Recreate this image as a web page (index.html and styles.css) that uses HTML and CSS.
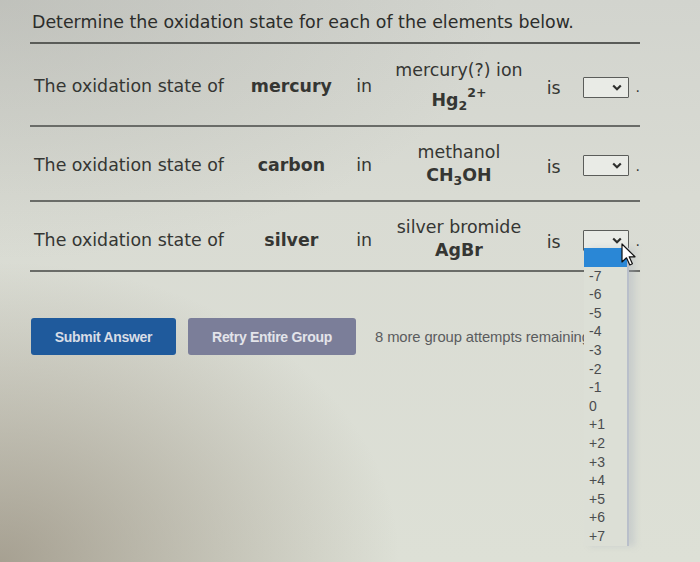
FILE: index.html
```html
<!DOCTYPE html>
<html>
<head>
<meta charset="utf-8">
<link rel="stylesheet" href="styles.css">
</head>
<body>
<div class="page">
  <h1 class="title">Determine the oxidation state for each of the elements below.</h1>

  <div class="row row--ion">
    <div class="label">The oxidation state of</div>
    <div class="element">mercury</div>
    <div class="in">in</div>
    <div class="compound">
      <div class="name">mercury(?) ion</div>
      <div class="formula">Hg<sub>2</sub><sup>2+</sup></div>
    </div>
    <div class="is">is</div>
    <div class="select"><svg width="10" height="7" viewBox="0 0 10 7"><path d="M1.2 1.5 L5 5.2 L8.8 1.5" fill="none" stroke="#2e2f2d" stroke-width="2.2"/></svg></div>
    <div class="dot">.</div>
  </div>

  <div class="row">
    <div class="label">The oxidation state of</div>
    <div class="element">carbon</div>
    <div class="in">in</div>
    <div class="compound">
      <div class="name">methanol</div>
      <div class="formula">CH<sub>3</sub>OH</div>
    </div>
    <div class="is">is</div>
    <div class="select"><svg width="10" height="7" viewBox="0 0 10 7"><path d="M1.2 1.5 L5 5.2 L8.8 1.5" fill="none" stroke="#2e2f2d" stroke-width="2.2"/></svg></div>
    <div class="dot">.</div>
  </div>

  <div class="row row--last">
    <div class="label">The oxidation state of</div>
    <div class="element">silver</div>
    <div class="in">in</div>
    <div class="compound">
      <div class="name">silver bromide</div>
      <div class="formula">AgBr</div>
    </div>
    <div class="is">is</div>
    <div class="select"><svg width="10" height="7" viewBox="0 0 10 7"><path d="M1.2 1.5 L5 5.2 L8.8 1.5" fill="none" stroke="#2e2f2d" stroke-width="2.2"/></svg></div>
    <div class="dot">.</div>
  </div>

  <div class="actions">
    <button class="btn btn--submit">Submit Answer</button>
    <button class="btn btn--retry">Retry Entire Group</button>
    <span class="attempts">8 more group attempts remaining</span>
  </div>

  <ul class="menu">
    <li class="menu-item menu-item--active">&nbsp;</li>
    <li class="menu-item">-7</li>
    <li class="menu-item">-6</li>
    <li class="menu-item">-5</li>
    <li class="menu-item">-4</li>
    <li class="menu-item">-3</li>
    <li class="menu-item">-2</li>
    <li class="menu-item">-1</li>
    <li class="menu-item">0</li>
    <li class="menu-item">+1</li>
    <li class="menu-item">+2</li>
    <li class="menu-item">+3</li>
    <li class="menu-item">+4</li>
    <li class="menu-item">+5</li>
    <li class="menu-item">+6</li>
    <li class="menu-item">+7</li>
  </ul>

  <svg class="cursor" width="16" height="24" viewBox="0 0 16 24">
    <path d="M1 1 L1 19 L5.5 14.8 L8.8 22 L11.4 20.8 L8.2 13.8 L14 13.8 Z" fill="#fff" stroke="#111" stroke-width="1.2" stroke-linejoin="round"/>
  </svg>
</div>
</body>
</html>
```

FILE: styles.css
```css
html, body {
  margin: 0;
  padding: 0;
}

body {
  width: 700px;
  height: 562px;
  overflow: hidden;
  background:
    radial-gradient(ellipse 400px 300px at 0% 100%, rgba(130, 118, 100, 0.6), rgba(130, 118, 100, 0) 100%),
    radial-gradient(ellipse 500px 260px at 0% 0%, rgba(150, 150, 145, 0.3), rgba(150, 150, 145, 0) 100%),
    linear-gradient(180deg, #d2d4ce 0%, #d9dbd3 35%, #dde0d6 100%);
  font-family: "DejaVu Sans", Verdana, sans-serif;
  color: #353633;
}

.page {
  position: relative;
  width: 610px;
  height: 562px;
  padding-left: 30px;
}

.title {
  margin: 0;
  padding: 9px 0 7px 2px;
  font-size: 17.4px;
  font-weight: normal;
  line-height: 26px;
  border-bottom: 2px solid #5a5c58;
  color: #2c2d2b;
}

.row {
  display: flex;
  align-items: center;
  padding: 14px 0 14px;
  border-bottom: 2px solid #6a6c68;
  font-size: 17.4px;
}

.row--ion {
  padding-top: 15px;
}

.row--ion .formula {
  margin-top: 8px;
}

.row--last {
  padding-bottom: 9px;
}

.label {
  width: 202px;
  padding-left: 4px;
  padding-top: 2px;
}

.element {
  width: 112px;
  text-align: center;
  font-weight: bold;
  padding-top: 2px;
}

.in {
  width: 33px;
  padding-left: 9px;
  padding-top: 2px;
}

.compound {
  width: 140px;
  text-align: center;
}

.name {
  line-height: 22px;
}

.formula {
  line-height: 22px;
  margin-top: 1px;
  font-weight: bold;
}

.formula sub {
  font-size: 12.5px;
  line-height: 0;
  vertical-align: -4px;
}

.formula sup {
  font-size: 12.5px;
  line-height: 0;
  vertical-align: 9px;
}

.is {
  width: 36px;
  padding-left: 18px;
  padding-top: 6px;
}

.select {
  box-sizing: border-box;
  width: 46px;
  height: 21px;
  margin-top: 4px;
  border: 1.5px solid #5b5d5a;
  border-radius: 1px;
  background: #e9ebe6;
  display: flex;
  align-items: center;
  justify-content: flex-end;
  padding-right: 6px;
}

.select svg {
  display: block;
}

.dot {
  margin-left: 7px;
  padding-top: 4px;
  font-size: 14px;
}

.actions {
  display: flex;
  align-items: center;
  margin-top: 46px;
  padding-left: 1px;
}

.btn {
  height: 37px;
  border: none;
  border-radius: 3px;
  font-family: "Liberation Sans", Arial, sans-serif;
  font-weight: bold;
  font-size: 14px;
  letter-spacing: -0.3px;
  color: #d8dde6;
  padding: 0;
}

.btn--submit {
  width: 145px;
  background: #1f5a9c;
}

.btn--retry {
  width: 168px;
  margin-left: 12px;
  background: #7b7e99;
  color: #e3e4ea;
}

.attempts {
  margin-left: 19px;
  font-family: "Liberation Sans", Arial, sans-serif;
  font-size: 14.8px;
  letter-spacing: -0.1px;
  color: #5a5c5e;
  white-space: nowrap;
}

.menu {
  position: absolute;
  left: 584px;
  top: 248px;
  width: 43px;
  margin: 0;
  padding: 0;
  list-style: none;
  background: #dcdfd6;
  border-right: 2px solid #b9bfca;
  box-shadow: 6px 0 6px rgba(170, 178, 190, 0.35);
  font-family: "Liberation Sans", Arial, sans-serif;
  font-size: 14px;
  color: #4a4c4e;
}

.menu-item {
  height: 18.6px;
  line-height: 18.6px;
  padding-left: 5px;
}

.menu-item--active {
  background: #2a87d6;
}

.cursor {
  position: absolute;
  left: 621px;
  top: 243px;
}
```
